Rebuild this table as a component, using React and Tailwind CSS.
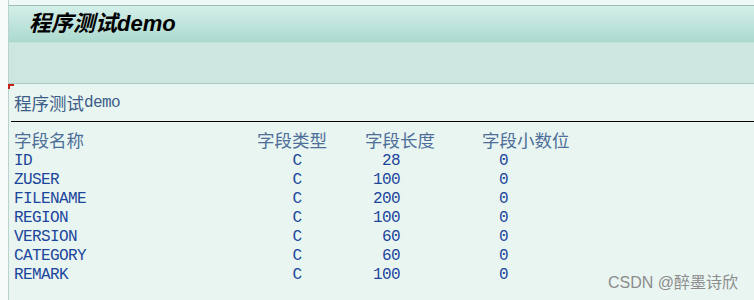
import React from 'react'

const FIELDS = [
  { name: 'ID', type: 'C', len: 28, dec: 0 },
  { name: 'ZUSER', type: 'C', len: 100, dec: 0 },
  { name: 'FILENAME', type: 'C', len: 200, dec: 0 },
  { name: 'REGION', type: 'C', len: 100, dec: 0 },
  { name: 'VERSION', type: 'C', len: 60, dec: 0 },
  { name: 'CATEGORY', type: 'C', len: 60, dec: 0 },
  { name: 'REMARK', type: 'C', len: 100, dec: 0 },
]

const cjk = "font-['Noto_Sans_CJK_SC',sans-serif]"
const mono = "font-['Liberation_Mono','Noto_Sans_CJK_SC',monospace] text-[16px] tracking-[-0.6px]"

export default function App() {
  return (
    <div className="relative flex h-[300px] w-[754px] overflow-hidden bg-white">
      {/* left gutter */}
      <div className="w-[8px] shrink-0 bg-[#f6fbfa]" />

      <div className="relative flex min-w-0 flex-1 flex-col border-l border-[#b9d2cd] bg-[#e9f5f1]">
        <div className="h-[5px] bg-[#eef8f6]" />

        {/* title bar */}
        <div className="flex h-[37px] items-center border-t border-[#9fbdb8] bg-gradient-to-b from-[#d4efe9] to-[#abd9ce] pl-[20px]">
          <span className="font-['Liberation_Sans','Noto_Sans_CJK_SC',sans-serif] text-[22px] font-bold italic leading-none text-black">
            程序测试demo
          </span>
        </div>

        {/* toolbar */}
        <div className="h-[42px] border-t border-[#c4e2db] border-b border-b-[#a8c8c2] bg-[#cde7e0]" />

        {/* red corner marker */}
        <div className="absolute left-[-1px] top-[84px] h-[5px] w-[6px] border-l-2 border-t-2 border-[#c8201a]" />

        {/* content */}
        <div className="flex flex-col pl-[5px]">
          <div className="flex h-[37px] items-center pt-[1px] leading-none text-[#3c5d88]">
            <span className={`${cjk} text-[17.5px]`}>程序测试</span>
            <span className={mono}>demo</span>
          </div>
          <div className="ml-[-3px] h-px bg-black" />

          {/* table header */}
          <div className={`${cjk} mt-[8px] flex h-[19px] items-center text-[17.5px] leading-none text-[#4d6e98]`}>
            <span className="w-[243px]">字段名称</span>
            <span className="w-[108px]">字段类型</span>
            <span className="w-[117px]">字段长度</span>
            <span>字段小数位</span>
          </div>

          {/* table rows */}
          <div className={`${mono} mt-[2px] flex flex-col leading-none text-[#1b469c]`}>
            {FIELDS.map((f) => (
              <div key={f.name} className="flex h-[19px] items-center">
                <span className="w-[243px]">{f.name}</span>
                <span className="w-[108px]">
                  <span className="inline-block w-[80px] text-center">{f.type}</span>
                </span>
                <span className="w-[117px]">
                  <span className="inline-block w-[35px] text-right">{f.len}</span>
                </span>
                <span className="pl-[17px]">{f.dec}</span>
              </div>
            ))}
          </div>
        </div>
      </div>

      {/* watermark */}
      <div className="absolute bottom-[9px] right-[16px] font-['Liberation_Sans','Noto_Sans_CJK_SC',sans-serif] text-[16px] leading-none text-[#8c8c8c]">
        CSDN @醉墨诗欣
      </div>
    </div>
  )
}
